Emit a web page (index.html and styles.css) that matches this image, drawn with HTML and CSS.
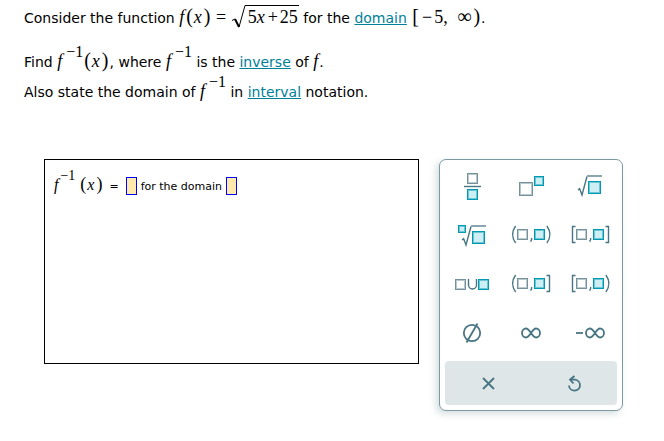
FILE: index.html
```
<!DOCTYPE html>
<html lang="en">
<head>
    <meta charset="UTF-8">
    <meta name="viewport" content="width=device-width, initial-scale=1.0">
    <title>Inverse functions</title>
    <link rel="stylesheet" href="styles.css">
</head>
<body>
    <!-- shared shapes for the keypad -->
    <svg class="defs" width="0" height="0" aria-hidden="true">
        <defs>
            <g id="open11"><rect class="open" x="0.5" y="0.5" width="10" height="10"/><rect class="open-in" x="1.5" y="1.5" width="8" height="8"/></g>
            <g id="open14"><rect class="open" x="0.5" y="0.5" width="13" height="13"/><rect class="open-in" x="1.5" y="1.5" width="11" height="11"/></g>
            <g id="full8"><rect class="full" x="0.5" y="0.5" width="7" height="7"/><rect class="full-in" x="1.5" y="1.5" width="5" height="5"/></g>
            <g id="full10"><rect class="full" x="0.5" y="0.5" width="9" height="9"/><rect class="full-in" x="1.5" y="1.5" width="7" height="7"/></g>
            <g id="full11"><rect class="full" x="0.5" y="0.5" width="10" height="10"/><rect class="full-in" x="1.5" y="1.5" width="8" height="8"/></g>
            <g id="full13"><rect class="full" x="0.5" y="0.5" width="12" height="12"/><rect class="full-in" x="1.5" y="1.5" width="10" height="10"/></g>
            <g id="pair"><use href="#open11" x="10" y="9"/><path d="M24.6 18v1.6l-1 2"/><use href="#full11" x="27" y="9"/></g>
            <path id="paren-l" d="M8.6 6Q2.6 14.5 8.6 23"/>
            <path id="paren-r" d="M39.9 6Q45.9 14.5 39.9 23"/>
            <path id="bracket-l" d="M9.5 6.5h-3v16h3"/>
            <path id="bracket-r" d="M39.5 6.5h3v16h-3"/>
            <path id="inf" d="M0 0C-2 -3 -3.2 -4.5 -5 -4.5A4 4.5 0 0 0 -5 4.5C-3.2 4.5 -2 3 0 0C2 -3 3.2 -4.5 5 -4.5A4 4.5 0 0 1 5 4.5C3.2 4.5 2 3 0 0Z"/>
        </defs>
    </svg>

    <section class="question">
        <p>Consider the function <span class="math"><i>f</i><span class="par">(</span><i>x</i><span class="par">)</span> = <svg class="surd" width="16" height="23" viewBox="0 0 16 23" aria-hidden="true"><path d="M1 15.5l3-1.5"/><path class="thick" d="M4 14l4 8"/><path d="M8 22L14 0.5h2"/></svg><span class="radicand">5<i>x</i><span class="op">+</span>25</span></span> for the <a href="#domain">domain</a> <span class="math"><span class="par">[</span><span class="op">−</span>5,<span class="wide"> </span><span class="par">∞</span><span class="par">)</span></span>.</p>
        <p class="gap">Find <span class="math"><i>f</i><sup>−1</sup><span class="par">(</span><i>x</i><span class="par">)</span></span>, where <span class="math"><i>f</i><sup>−1</sup></span> is the <a href="#inverse">inverse</a> of <span class="math"><i>f</i></span>.</p>
        <p>Also state the domain of <span class="math"><i>f</i><sup>−1</sup></span> in <a href="#interval">interval</a> notation.</p>
    </section>

    <main class="work">
        <div class="answer">
            <span class="math"><i>f</i><sup>−1</sup> <span class="par">(</span><i>x</i><span class="par">)</span></span>
            <span class="equals">=</span>
            <input class="slot" type="text" aria-label="Inverse function">
            <label for="domain-slot">for the domain</label>
            <input class="slot" id="domain-slot" type="text">
        </div>

        <div class="keypad">
            <div class="keys">
                <button type="button" aria-label="Fraction"><svg viewBox="0 0 49 31"><use href="#open11" x="19" y="2"/><path d="M16 15.5h17"/><use href="#full11" x="19" y="18"/></svg></button>
                <button type="button" aria-label="Exponent"><svg viewBox="0 0 49 31"><use href="#open14" x="12" y="11"/><use href="#full10" x="27" y="5"/></svg></button>
                <button type="button" aria-label="Square root"><svg viewBox="0 0 49 31"><path d="M12 19l1.6-1.4L16 24L21 5.5"/><path class="bar" d="M21 5h15"/><use href="#full13" x="22" y="10"/></svg></button>

                <button type="button" aria-label="Nth root"><svg viewBox="0 0 49 31"><use href="#full8" x="10" y="5"/><path d="M14 20l1.6-1.4L18 25L23 6.5"/><path class="bar" d="M23 6h15"/><use href="#full13" x="24" y="11"/></svg></button>
                <button type="button" aria-label="Open interval"><svg viewBox="0 0 49 31"><use href="#paren-l"/><use href="#pair"/><use href="#paren-r"/></svg></button>
                <button type="button" aria-label="Closed interval"><svg viewBox="0 0 49 31"><use href="#bracket-l"/><use href="#pair"/><use href="#bracket-r"/></svg></button>

                <button type="button" aria-label="Union"><svg viewBox="0 0 49 31"><use href="#open11" x="7" y="10"/><path d="M20.5 10v6a4 4 0 0 0 8 0v-6"/><use href="#full11" x="30" y="10"/></svg></button>
                <button type="button" aria-label="Left open interval"><svg viewBox="0 0 49 31"><use href="#paren-l"/><use href="#pair"/><use href="#bracket-r"/></svg></button>
                <button type="button" aria-label="Right open interval"><svg viewBox="0 0 49 31"><use href="#bracket-l"/><use href="#pair"/><use href="#paren-r"/></svg></button>

                <button type="button" aria-label="Empty set"><svg class="bold" viewBox="0 0 49 31"><ellipse cx="24" cy="15" rx="8.2" ry="8.2"/><path d="M29.5 5.5L18.5 24.5"/></svg></button>
                <button type="button" aria-label="Infinity"><svg class="bold" viewBox="0 0 49 31"><use href="#inf" x="24" y="15"/></svg></button>
                <button type="button" aria-label="Negative infinity"><svg class="bold" viewBox="0 0 49 31"><path d="M10 15h7"/><use href="#inf" x="29" y="15"/></svg></button>
            </div>
            <div class="tools">
                <button type="button" aria-label="Clear"><svg class="bold" viewBox="0 0 49 31"><path d="M19 10l11 11M30 10L19 21"/></svg></button>
                <button type="button" aria-label="Undo"><svg class="bold" viewBox="0 0 49 31"><path d="M24.5 8L20 11.7L23.5 15.5M20 11.7H25A5.5 5.5 0 1 1 19 17.5"/></svg></button>
            </div>
        </div>
    </main>
</body>
</html>
```

FILE: styles.css
```
* {
    box-sizing: border-box;
}
body {
    margin: 0;
    padding: 3px 41px 30px 24px;
    background-color: white;
    color: black;
    font-family: Verdana, "DejaVu Sans", sans-serif;
    font-size: 14px;
}
.defs {
    position: absolute;
}
p {
    margin: 0;
    line-height: 30px;
}
p.gap {
    margin-top: 14px;
}
a {
    color: #007f99;
    text-decoration: underline;
}

/* math */
.math {
    font-family: "Liberation Serif", serif;
    font-size: 18px;
    line-height: 1;
}
.math i {
    padding-right: 1px;
}
.par {
    font-size: 20px;
    padding: 0 1px;
}
.op {
    padding: 0 2px;
}
.wide {
    padding-right: 4px;
}
sup {
    font-size: 16px;
    line-height: 0;
    vertical-align: 10px;
    margin-left: 3px;
}
.surd {
    vertical-align: -5px;
    fill: none;
    stroke: black;
}
.surd .thick {
    stroke-width: 2;
}
.radicand {
    display: inline-block;
    height: 23px;
    padding: 0 1px;
    line-height: 23px;
    border-top: 1px solid black;
}

/* answer area and keypad */
.work {
    display: flex;
    align-items: flex-start;
    gap: 20px;
    margin: 52px 0 0 20px;
}
.answer {
    flex: 1;
    display: flex;
    align-items: baseline;
    min-height: 205px;
    padding: 15px 9px;
    border: 1px solid black;
    font-size: 11px;
}
.answer .math {
    font-size: 16px;
}
.answer sup {
    font-size: 14px;
    margin-left: 1px;
}
.answer .par {
    font-size: 18px;
}
.equals {
    padding: 0 7px 0 6px;
}
.answer label {
    padding: 0 4px;
}
.slot {
    width: 11px;
    height: 18px;
    padding: 0;
    border: 1px solid blue;
    border-radius: 0;
    background-color: #ffe9ab;
    font-size: 11px;
}
.keypad {
    width: 184px;
    padding: 2px 0 5px;
    border: 1px solid #7b98a3;
    border-radius: 7px;
    background-color: white;
    box-shadow: -3px 3px 7px #d5dfe1;
}
.keys {
    display: grid;
    grid-template-columns: repeat(3, 59px);
    grid-auto-rows: 49px;
    padding-left: 3px;
}
.tools {
    display: grid;
    grid-template-columns: 1fr 1fr;
    height: 44px;
    margin: 3px 5px 0;
    border-radius: 4px;
    background-color: #dee6e8;
}
.keypad button {
    display: flex;
    align-items: center;
    justify-content: center;
    padding: 0;
    border: none;
    background: none;
    cursor: pointer;
}
.keypad svg {
    width: 49px;
    height: 31px;
    fill: none;
    stroke: #487583;
    stroke-width: 1.4;
}
.keypad svg.bold {
    stroke-width: 1.8;
}
.keypad .bar {
    stroke: #8ba6ae;
    stroke-width: 2;
}
.open, .open-in, .full, .full-in {
    stroke-width: 1;
}
.open {
    stroke: #76929c;
    fill: white;
}
.open-in {
    stroke: #b9c8cd;
}
.full {
    stroke: #0098b3;
    fill: #cdeef3;
}
.full-in {
    stroke: #6cc5d3;
}
```
